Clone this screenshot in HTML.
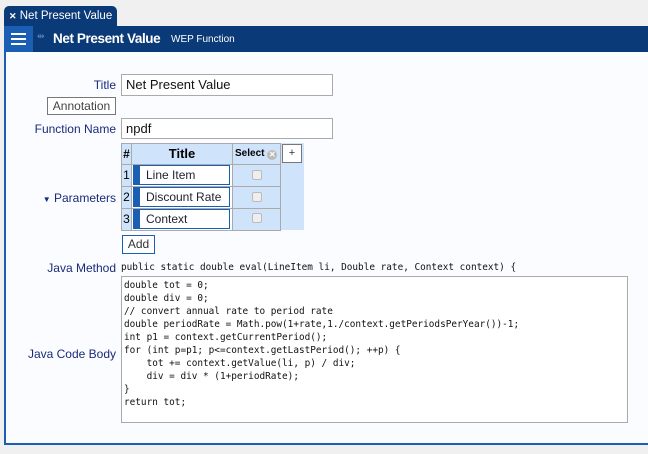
<!DOCTYPE html>
<html><head><style>
body{margin:0;width:648px;height:454px;background:#f0f0f0;font-family:"Liberation Sans",Arial,sans-serif;position:relative;overflow:hidden}
.abs{position:absolute}
.tab{left:4px;top:6px;width:113px;height:20px;background:#0b3a78;border-radius:5px 5px 0 0;color:#fff;font-size:11.5px;line-height:20px;white-space:nowrap;overflow:hidden}
.hdr{left:4px;top:26px;width:644px;height:26px;background:#0b3a78}
.panel{left:4px;top:52px;width:644px;height:393px;background:#fafcff;border-left:2px solid #1a5fb4;border-bottom:2px solid #1a5fb4;box-sizing:border-box}
.lbl{font-size:12px;color:#1a2a7a;text-align:right;width:116px;left:0}
.inp{background:#fff;border:1px solid #aaa;box-sizing:border-box;font-size:13px;padding-left:4px;color:#111}
.mono{font-family:"DejaVu Sans Mono","Liberation Mono",monospace;font-size:9.4px;white-space:pre;color:#111}
.cell{position:absolute;border:1px solid #aaa;box-sizing:border-box;background:#cfe3fb;font-size:12px}
.ti{position:absolute;left:133px;width:97px;height:20px;border:1px solid #1a5fb4;border-left:7px solid #1a5fb4;box-sizing:border-box;background:#fff;font-size:12px;line-height:18px;padding-left:6px;color:#223}
.cb{position:absolute;left:252px;width:8px;height:8px;border:1px solid #bbb;border-radius:2px;background:#eee}
</style></head><body>
<div class="abs tab"><span style="margin-left:5px;font-size:9px;font-weight:bold">✕</span> Net Present Value</div>
<div class="abs hdr">
 <div class="abs" style="left:0;top:0;width:29px;height:26px;background:#1a5fb4"></div>
 <div class="abs" style="left:7px;top:7px;width:15px;height:2px;background:#fff;box-shadow:0 5px #fff,0 10px #fff"></div>
 <div class="abs" style="left:33px;top:5px;color:#6688bb;font-size:9px">⇹</div>
 <div class="abs" style="left:49px;top:5px;color:#fff;font-weight:bold;font-size:13.5px;letter-spacing:-0.4px">Net Present Value</div>
 <div class="abs" style="left:167px;top:8px;color:#fff;font-size:10px">WEP Function</div>
</div>
<div class="abs panel"></div>
<div class="abs lbl" style="top:78px">Title</div>
<div class="abs inp" style="left:121px;top:74px;width:212px;height:22px;line-height:20px">Net Present Value</div>
<div class="abs" style="left:47px;top:97px;width:69px;height:18px;border:1px solid #777;box-sizing:border-box;background:#fff;font-size:12px;color:#444;text-align:center;line-height:16px">Annotation</div>
<div class="abs lbl" style="top:122px">Function Name</div>
<div class="abs inp" style="left:121px;top:118px;width:212px;height:21px;line-height:19px">npdf</div>
<div class="abs lbl" style="top:191px"><span style="font-size:8px">▼</span> Parameters</div>
<div class="abs" style="left:121px;top:143px;width:183px;height:87px;background:#cfe3fb"></div>
<div class="cell" style="left:121px;top:143px;width:11px;height:22px;font-weight:bold;font-size:12px;line-height:20px;text-align:center">#</div>
<div class="cell" style="left:131px;top:143px;width:102px;height:22px;font-weight:bold;font-size:13px;line-height:20px;text-align:center">Title</div>
<div class="cell" style="left:232px;top:143px;width:49px;height:22px;font-weight:bold;font-size:10px;line-height:20px;padding-left:2px">Select <span style="display:inline-block;width:10px;height:10px;border-radius:50%;background:#bbb;color:#fff;font-size:8px;text-align:center;line-height:10px;vertical-align:-1px">✕</span></div>
<div class="cell" style="left:121px;top:164px;width:11px;height:23px;line-height:21px;text-align:center">1</div>
<div class="cell" style="left:121px;top:186px;width:11px;height:23px;line-height:21px;text-align:center">2</div>
<div class="cell" style="left:121px;top:208px;width:11px;height:23px;line-height:21px;text-align:center">3</div>
<div class="cell" style="left:131px;top:164px;width:102px;height:67px;background:#fff"></div>
<div class="cell" style="left:131px;top:186px;width:102px;height:23px;background:transparent"></div>
<div class="cell" style="left:232px;top:164px;width:49px;height:23px"></div>
<div class="cell" style="left:232px;top:186px;width:49px;height:23px"></div>
<div class="cell" style="left:232px;top:208px;width:49px;height:23px"></div>
<div class="ti" style="top:165px">Line Item</div>
<div class="ti" style="top:187px">Discount Rate</div>
<div class="ti" style="top:209px">Context</div>
<div class="cb" style="top:170px"></div>
<div class="cb" style="top:192px"></div>
<div class="cb" style="top:213px"></div>
<div class="abs" style="left:282px;top:144px;width:20px;height:19px;border:1px solid #777;box-sizing:border-box;background:#fff;font-size:11px;text-align:center;line-height:17px;color:#333">+</div>
<div class="abs" style="left:122px;top:235px;width:33px;height:19px;border:1px solid #1a5fb4;box-sizing:border-box;background:#fff;font-size:12px;text-align:center;line-height:17px;color:#333">Add</div>
<div class="abs lbl" style="top:261px">Java Method</div>
<div class="abs mono" style="left:121px;top:262px">public static double eval(LineItem li, Double rate, Context context) {</div>
<div class="abs lbl" style="top:347px">Java Code Body</div>
<div class="abs" style="left:121px;top:276px;width:507px;height:147px;border:1px solid #aaa;box-sizing:border-box;background:#fff"></div>
<div class="abs mono" style="left:124px;top:279px;line-height:13px">double tot = 0;
double div = 0;
// convert annual rate to period rate
double periodRate = Math.pow(1+rate,1./context.getPeriodsPerYear())-1;
int p1 = context.getCurrentPeriod();
for (int p=p1; p&lt;=context.getLastPeriod(); ++p) {
    tot += context.getValue(li, p) / div;
    div = div * (1+periodRate);
}
return tot;</div>
</body></html>
